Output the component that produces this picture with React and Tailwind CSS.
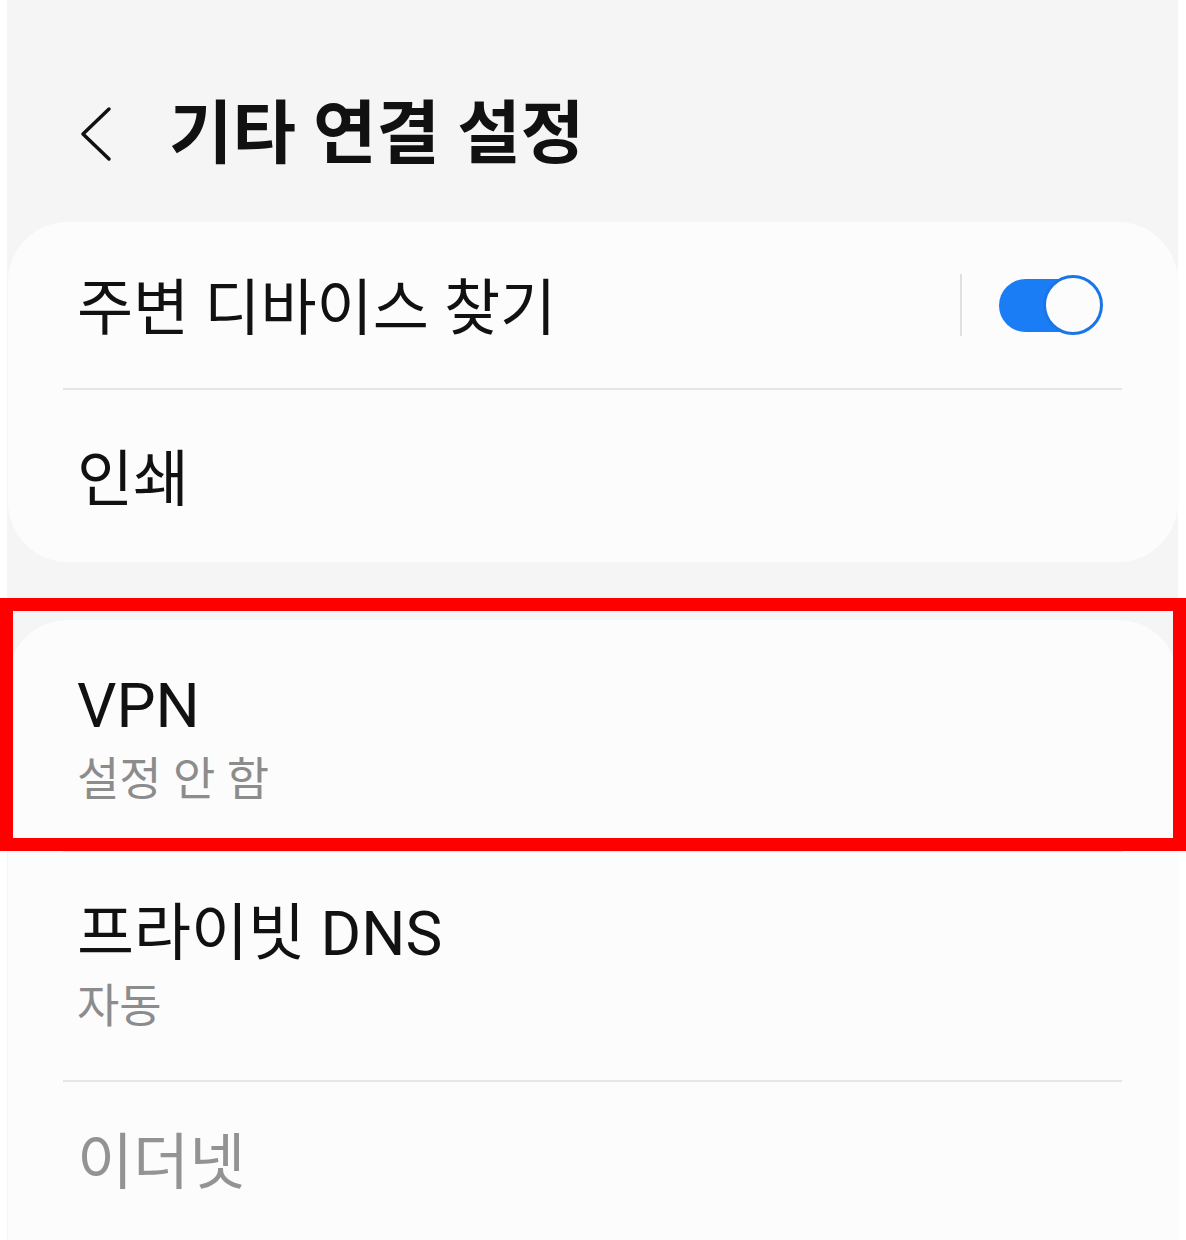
import { useState } from 'react';

const font = { fontFamily: 'Roboto, "Noto Sans CJK KR", sans-serif' };

function Toggle({ on }) {
  return (
    <div className="relative w-[104px] h-[64px] flex items-center">
      <div className={`w-[90px] h-[53px] rounded-full ${on ? 'bg-[#1a7df5]' : 'bg-[#c8c8c8]'}`} />
      <div className="absolute right-0 top-[2px] w-[60px] h-[60px] rounded-full bg-[#fcfcfc] border-[3px] border-[#1a76e8]" />
    </div>
  );
}

function Divider() {
  return <div className="ml-[55px] w-[1059px] h-[2px] bg-[#e6e6e6]" />;
}

export default function App() {
  const [nearby, setNearby] = useState(true);

  return (
    <div className="w-[1186px] h-[1240px] overflow-hidden bg-white relative" style={font}>
      <div className="ml-[7px] w-[1171px] h-full bg-[#f5f5f5]">
        {/* 헤더 */}
        <div className="h-[222px] pt-[102px] pl-[72px] flex items-start">
          <div className="flex items-center gap-[56px] h-[64px]">
            <svg width="34" height="56" viewBox="0 0 34 56" fill="none">
              <path d="M30 3 L4 28 L30 53" stroke="#111" strokeWidth="3.5" strokeLinecap="round" strokeLinejoin="round" />
            </svg>
            <h1 className="text-[69px] leading-none font-bold text-[#111]">기타 연결 설정</h1>
          </div>
        </div>

        {/* 첫 번째 카드 */}
        <div className="ml-[1px] w-[1170px] rounded-[60px] bg-[#fcfcfc]">
          <div className="h-[166px] flex items-center pl-[69px] pr-[75px]">
            <span className="flex-1 mt-[9px] text-[61px] leading-[1.2] text-[#111]">주변 디바이스 찾기</span>
            <div className="w-[2px] h-[62px] bg-[#e0e0e0] mr-[37px]" />
            <button onClick={() => setNearby(!nearby)}>
              <Toggle on={nearby} />
            </button>
          </div>
          <Divider />
          <div className="h-[172px] flex items-center pl-[69px]">
            <span className="mt-[9px] text-[61px] leading-[1.2] text-[#111]">인쇄</span>
          </div>
        </div>

        {/* 두 번째 카드 */}
        <div className="mt-[58px] ml-[1px] w-[1170px] rounded-t-[60px] bg-[#fcfcfc] h-[700px]">
          <div className="h-[230px] pt-[52px] pl-[69px] flex flex-col">
            <span className="text-[62px] leading-[68px] text-[#111]">VPN</span>
            <span className="mt-[14px] text-[46px] leading-[50px] text-[#8c8c8c]">설정 안 함</span>
          </div>
          <Divider />
          <div className="h-[228px] pt-[48px] pl-[69px] flex flex-col">
            <span className="text-[62px] leading-[68px] text-[#111]">프라이빗 DNS</span>
            <span className="mt-[13px] text-[46px] leading-[50px] text-[#8c8c8c]">자동</span>
          </div>
          <Divider />
          <div className="pt-[47px] pl-[69px]">
            <span className="text-[61px] leading-[68px] text-[#939393]">이더넷</span>
          </div>
        </div>
      </div>

      {/* 강조 박스 */}
      <div className="absolute left-0 top-[598px] w-[1186px] h-[253px] border-[13px] border-[#ff0000] pointer-events-none" />
    </div>
  );
}
